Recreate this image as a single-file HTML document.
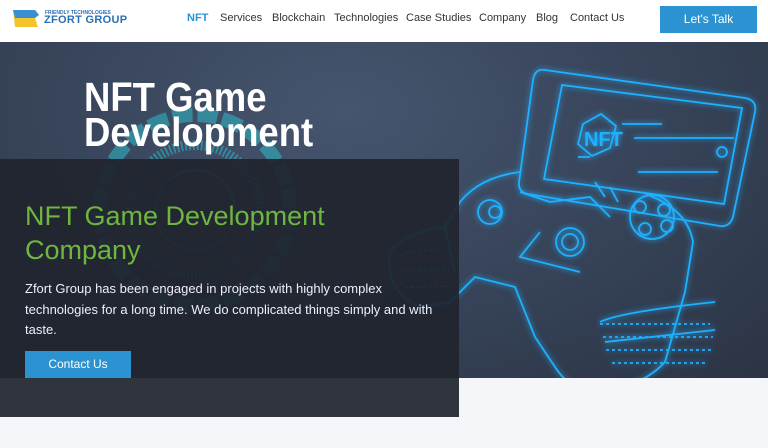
<!DOCTYPE html><html><head><style>
*{margin:0;padding:0;box-sizing:border-box}
body{width:768px;height:448px;overflow:hidden;background:#f5f6f9;font-family:"Liberation Sans",sans-serif;position:relative}
.nav{position:absolute;top:0;left:0;width:768px;height:42px;background:#fff}
.nav a{position:absolute;top:12px;font-size:11px;color:#333}
.btn{position:absolute;left:660px;top:6px;width:97px;height:27px;background:#2b93d1;color:#fff;font-size:12px;text-align:center;line-height:27px}
.hero{position:absolute;top:42px;left:0;width:768px;height:336px;overflow:hidden;background:radial-gradient(ellipse at 45% 20%,#46556e 0%,#37445a 50%,#2b3444 100%)}
.h1{position:absolute;left:84px;top:80px;color:#fff;font-weight:bold;font-size:41px;line-height:35px;transform:scaleX(.89);transform-origin:left;z-index:5;white-space:nowrap}
.panel{position:absolute;left:0;top:159px;width:459px;height:258px;background:rgba(32,37,46,.93)}
.panel h2{position:absolute;left:25px;top:40px;font-weight:normal;font-size:27px;line-height:34px;color:#6fb63f}
.panel p{position:absolute;left:25px;top:120px;width:420px;font-size:13px;line-height:20.5px;color:#eef}
.cb{position:absolute;left:25px;top:192px;width:106px;height:27px;background:#2b93d1;color:#fff;font-size:12px;text-align:center;line-height:27px}
</style></head><body>
<div class="nav">
<svg style="position:absolute;left:12px;top:7px" width="30" height="22"><path d="M1 3h22l4 5-4 3 3 9H3z" fill="#f3c52a"/><path d="M1 3h22l4 5-4 3H3z" fill="#3a8fd0"/></svg>
<div style="position:absolute;left:45px;top:10px;font-size:5px;color:#2a6fb3;font-weight:bold">FRIENDLY TECHNOLOGIES</div>
<div style="position:absolute;left:44px;top:14px;font-size:11px;color:#2a6fb3;font-weight:bold;letter-spacing:.3px">ZFORT GROUP</div>
<a style="left:187px;color:#2b93d1;font-weight:bold">NFT</a><a style="left:220px">Services</a><a style="left:272px">Blockchain</a><a style="left:334px">Technologies</a><a style="left:406px">Case Studies</a><a style="left:479px">Company</a><a style="left:536px">Blog</a><a style="left:570px">Contact Us</a>
<div class="btn">Let's Talk</div></div>
<div class="hero">
<svg style="position:absolute;left:80px;top:58px" width="230" height="220" opacity=".55"><g fill="none" stroke="#2fb9c9"><circle cx="115" cy="110" r="95" stroke-width="14" stroke-dasharray="20 5"/><circle cx="115" cy="110" r="65" stroke-width="10" stroke-dasharray="2 2"/><circle cx="115" cy="110" r="40" stroke-width="3"/></g></svg>
<svg style="position:absolute;left:0;top:-42px" width="768" height="378"><g fill="none" stroke="#1fb0ff" stroke-width="1.8" filter="drop-shadow(0 0 3px #1fb0ff)">
<path d="M545 70l200 28q12 2 10 14l-22 105q-3 10-13 9L528 194q-10-2-9-12l14-102q2-12 12-10z"/>
<path d="M562 85l180 23-18 96-180-25z"/>
<path d="M583 124l18-10 15 12-6 22-18 8-14-12z"/><text x="584" y="146" font-size="20" fill="#1fb0ff" stroke="none" font-weight="bold">NFT</text>
<path d="M622 124h40M634 138h100M638 172h80M578 157h12"/>
<circle cx="722" cy="152" r="5"/>
<path d="M520 172q-40 5-60 30l-15 25q-40 5-55 25-5 40 30 55l30-5 25-25 40 10 20 50 20 30q20 30 50 25 40-8 60-30l20-70 8-50q-5-30-40-45l-10-5"/>
<path d="M445 227l10 45M600 322q20-10 115-20M605 342l110-12"/>
<g stroke-dasharray="3 3"><path d="M395 257q20-10 60-5M400 272l55-3M405 287l45-1M600 324h110M603 337h110M606 350h105M612 363h95"/></g>
<circle cx="490" cy="212" r="12"/><circle cx="495" cy="212" r="6"/><circle cx="570" cy="242" r="14"/><circle cx="570" cy="242" r="8"/>
<circle cx="652" cy="217" r="22"/><circle cx="640" cy="207" r="6"/><circle cx="664" cy="210" r="6"/><circle cx="645" cy="229" r="6"/><circle cx="667" cy="226" r="6"/>
<path d="M520 192l30 10 40-5 20 20M540 232l-20 25 60 15M595 182l10 15M610 187l8 15"/>
</g></svg>
<div class="h1" style="top:38px">NFT Game<br>Development</div>
</div>
<div class="panel"><h2>NFT Game Development<br>Company</h2>
<p>Zfort Group has been engaged in projects with highly complex technologies for a long time. We do complicated things simply and with taste.</p>
<div class="cb">Contact Us</div></div>
</body></html>
